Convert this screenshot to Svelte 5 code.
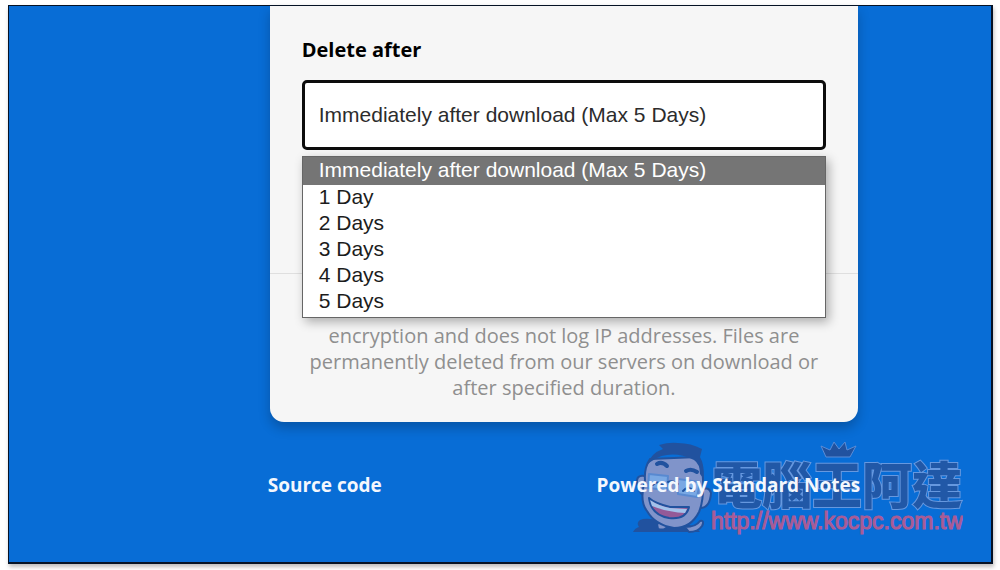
<script lang="ts">
  const options = ['Immediately after download (Max 5 Days)', '1 Day', '2 Days', '3 Days', '4 Days', '5 Days'];
  let duration = $state(options[0]);
</script>

<div class="page">
  <main>
    <section class="card">
      <form>
        <label for="duration">Delete after</label>
        <div class="field">
          <select id="duration" bind:value={duration}>
            {#each options as option}
              <option value={option}>{option}</option>
            {/each}
          </select>
          <div class="menu" role="listbox" aria-labelledby="duration">
            {#each options as option}
              <button type="button" role="option" aria-selected={option === duration} onclick={() => (duration = option)}>{option}</button>
            {/each}
          </div>
        </div>
      </form>
      <p>encryption and does not log IP addresses. Files are permanently deleted from our servers on download or after specified duration.</p>
    </section>
    <footer>
      <a href="#source">Source code</a>
      <a href="#notes">Powered by Standard Notes</a>
    </footer>
  </main>

  <svg class="mark" viewBox="634 436 330 100" width="330" height="100">
    <g stroke-linejoin="round" stroke-linecap="round">
      <path class="ink" d="M634 532 Q636 528 640 527 Q637 523 641 520 Q645 518 652 519 L686 524 Q697 526 701 532 Z" />
      <path class="skin" d="M658 524 Q664 520 669 526 Q666 531 659 529 Z" />
      <path class="skin" d="M686 527 Q697 527 701 521 Q706 520 703 526 Q699 532 690 532 Z" />
      <path class="skin" d="M646 476 Q637 474 638 484 Q641 497 649 496 Z" />
      <path class="skin" d="M703 490 Q710 486 712 493 Q711 508 701 508 Z" />
      <path class="skin" d="M651 459 Q645 468 646 480 Q640 501 648 511 Q656 525 675 528 Q692 528 700 512 Q705 500 704 480 Q704 463 699 457 Z" />
      <path class="ink" d="M647 466 Q652 453 664 449 L660 445 Q670 442 679 443 Q692 443 703 449 L701 457 Q706 466 704 478 L701 474 Q701 464 695 460 Q680 453 668 455 Q657 456 647 466 Z" />
      <path class="brow" d="M658 464 Q663 461 668 466 M687 471 Q692 468 698 472" />
      <path class="lens" d="M650 474 L669 476 L668 490 L649 488 Z M679 479 L701 482 L698 497 L679 494 Z" />
      <path class="rim" d="M669 482 Q674 480 679 484 M654 485 Q658 480 664 485 M684 491 Q689 485 695 491" />
      <path class="mouth" d="M650 498 Q655 503 671 507 L690 507 Q687 520 670 518 Q652 515 650 498 Z" />
      <path class="teeth" d="M651 500 Q660 506 671 508 L688 509 L686 513 Q668 512 653 506 Z" />
    </g>
    <path class="crown" d="M827 457 L822 446 L831 450 L835 442 L840 449 L846 442 L848 450 L857 446 L851 457 Z" />
    <text class="name" x="713" y="504">電腦王阿達</text>
    <text class="site" x="712" y="529">http://www.kocpc.com.tw</text>
  </svg>
</div>

<style>
  :global(body) {
    background: #fff;
  }
  .page {
    position: relative;
    box-sizing: border-box;
    min-height: 559px;
    margin: 5px 7px 6px 8px;
    border: solid #061326;
    border-width: 1px 2px 2px 1px;
    background: #086dd6;
    box-shadow: 1px 3px 4px rgb(0 0 0 / 25%);
    display: grid;
    grid-template-columns: 261fr 589fr 133fr;
    font-family: "Open Sans", sans-serif;
    font-size: 20px;
  }
  main {
    grid-column: 2;
    min-width: 0;
    position: relative;
    z-index: 1;
  }
  .card {
    background: #f6f6f6;
    border-radius: 0 0 14px 14px;
    box-shadow: 0 6px 12px rgb(0 0 0 / 22%);
  }
  form {
    padding: 30px 32px 0;
    border-bottom: 1px solid #dfdfdf;
  }
  label {
    display: block;
    font: 700 20px/28px "Open Sans", sans-serif;
    color: #000;
    margin-bottom: 16px;
  }
  .field {
    position: relative;
    padding-bottom: 123px;
  }
  select {
    display: block;
    width: 100%;
    height: 70px;
    padding: 0 14px 2px;
    border: 3px solid #0c0c0c;
    border-radius: 5px;
    background: #fff;
    color: #2c2c2c;
    appearance: none;
    outline: none;
    font: 21px "Liberation Sans", sans-serif;
  }
  .menu {
    position: absolute;
    top: 76px;
    left: 0;
    right: 0;
    display: flex;
    flex-direction: column;
    padding: 0 0 2px;
    border: 1px solid #666;
    background: #fff;
    box-shadow: 3px 4px 10px rgb(0 0 0 / 30%);
  }
  .menu button {
    height: 26px;
    padding: 0 16px 2px;
    border: 0;
    background: none;
    color: #1c1c1c;
    text-align: left;
    font: 21px/24px "Liberation Sans", sans-serif;
  }
  .menu button[aria-selected="true"] {
    height: 28px;
    background: #757575;
    color: #fff;
  }
  p {
    margin: 0;
    padding: 49px 32px 21px;
    font: 20px/26px "Open Sans", sans-serif;
    color: #8f8f8f;
    text-align: center;
  }
  footer {
    display: flex;
    justify-content: space-between;
    margin: 49px -2px 0;
  }
  footer a {
    color: #f4f7fd;
    text-decoration: none;
    font: 700 19px/28px "Open Sans", sans-serif;
  }
  .mark {
    position: absolute;
    right: 28px;
    bottom: 26px;
    opacity: 0.7;
    pointer-events: none;
  }
  .ink { fill: #2c4888; }
  .skin { fill: #b4a5c6; stroke: #2c4888; stroke-width: 2; }
  .brow { fill: none; stroke: #2c4888; stroke-width: 4; }
  .lens { fill: #a9c2ea; stroke: #7b96cf; stroke-width: 2; }
  .rim { fill: none; stroke: #2c4888; stroke-width: 2; }
  .mouth { fill: #d0527e; stroke: #2c4888; stroke-width: 2; }
  .teeth { fill: #e4e6f5; }
  .crown { fill: #2c4888; stroke: #7f9ad6; stroke-width: 1; }
  .name {
    font: 900 50px "Noto Sans CJK TC", sans-serif;
    fill: #2c5094;
    stroke: #8fabe4;
    stroke-width: 2;
    paint-order: stroke;
  }
  .site {
    font: 23px "Liberation Sans", sans-serif;
    fill: #ee557a;
    stroke: #ee557a;
    stroke-width: 1;
  }
</style>
